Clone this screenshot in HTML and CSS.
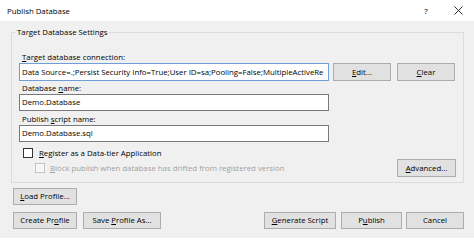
FILE: index.html
```html
<!DOCTYPE html>
<html lang="en">
<head>
<meta charset="utf-8">
<title>Publish Database</title>
<link rel="stylesheet" href="styles.css">
</head>
<body>
<div class="window">
  <div class="titlebar">
    <span class="title">Publish Database</span>
    <div class="controls">
      <span class="ctl help">?</span>
      <span class="ctl close">
        <svg width="10" height="10" viewBox="0 0 10 10"><path d="M0.5 0.5 L9.5 9.5 M9.5 0.5 L0.5 9.5" stroke="#1a1a1a" stroke-width="1" fill="none"/></svg>
      </span>
    </div>
  </div>
  <div class="content">
    <fieldset class="group">
      <legend class="legend">Target Database Settings</legend>
      <div class="group-body">
        <div class="label first"><u>T</u>arget database connection:</div>
        <div class="conn-row">
          <div class="textbox focused">Data Source=.;Persist Security Info=True;User ID=sa;Pooling=False;MultipleActiveRe</div>
          <button class="btn edit"><u>E</u>dit...</button>
          <button class="btn clear"><u>C</u>lear</button>
        </div>
        <div class="label">Database <u>n</u>ame:</div>
        <div class="textbox">Demo.Database</div>
        <div class="label">Publish <u>s</u>cript name:</div>
        <div class="textbox">Demo.Database.sql</div>
        <div class="check-row">
          <span class="checkbox"></span>
          <span><u>R</u>egister as a Data-tier Application</span>
        </div>
        <div class="block-row">
          <span class="checkbox disabled"></span>
          <span class="disabled-text"><u>B</u>lock publish when database has drifted from registered version</span>
          <button class="btn advanced"><u>A</u>dvanced...</button>
        </div>
      </div>
    </fieldset>
    <div class="footer">
      <div class="footer-row load-row">
        <button class="btn load"><u>L</u>oad Profile...</button>
      </div>
      <div class="footer-row action-row">
        <button class="btn create">Create Pr<u>o</u>file</button>
        <button class="btn save">Save <u>P</u>rofile As...</button>
        <button class="btn generate"><u>G</u>enerate Script</button>
        <button class="btn publish">P<u>u</u>blish</button>
        <button class="btn cancel">Cancel</button>
      </div>
    </div>
  </div>
</div>
</body>
</html>
```
FILE: styles.css
```css
html, body {
  margin: 0;
  padding: 0;
  background: #ffffff;
}
body {
  font-family: "Open Sans", "Noto Sans", sans-serif;
  font-size: 7.8px;
  color: #000;
}
.window {
  width: 474px;
  height: 241px;
  display: flex;
  flex-direction: column;
  padding-bottom: 3px;
  box-sizing: border-box;
  background: #fff;
}
.titlebar {
  height: 21px;
  flex: 0 0 21px;
  display: flex;
  align-items: center;
  padding-left: 7px;
  background: #fff;
}
.title {
  line-height: 12px;
}
.controls {
  margin-left: auto;
  display: flex;
  height: 21px;
}
.ctl {
  width: 32px;
  height: 21px;
  display: flex;
  align-items: center;
  justify-content: center;
}
.help {
  font-size: 8px;
}
.close svg {
  display: block;
  width: 9px;
  height: 9px;
}
.content {
  flex: 1;
  background: #f0f0f0;
  padding: 0 10px 0 11px;
  display: flex;
  flex-direction: column;
}
.group {
  margin: 5px 0 0 0;
  padding: 0;
  border: 1px solid #dcdcdc;
  min-width: 0;
}
.legend {
  margin-left: 3px;
  padding: 0 2px;
  line-height: 12px;
}
.group-body {
  padding: 0 7px 5px 7px;
  display: flex;
  flex-direction: column;
}
.label {
  line-height: 12px;
  padding-left: 3px;
  margin-top: 1px;
}
.label.first {
  margin-top: 13px;
}
.label + .textbox {
  margin-bottom: 1px;
}
.textbox {
  width: 310px;
  height: 17px;
  box-sizing: border-box;
  border: 1px solid #7a7a7a;
  background: #fff;
  padding: 0 2px;
  line-height: 15px;
  white-space: nowrap;
  overflow: hidden;
}
.textbox.focused {
  border-color: #6f9fd8;
}
.conn-row {
  display: flex;
  align-items: stretch;
  height: 18px;
}
.conn-row .textbox {
  height: 18px;
  line-height: 16px;
}
.btn {
  font: inherit;
  color: #000;
  background: #e1e1e1;
  border: 1px solid #adadad;
  padding: 0;
  margin: 0;
  height: 17px;
  line-height: 15px;
  text-align: center;
  border-radius: 0;
  box-sizing: border-box;
}
.edit {
  width: 58px;
  height: 18px;
  margin-left: 4px;
}
.clear {
  width: 58px;
  height: 18px;
  margin-left: 6px;
}
.check-row {
  display: flex;
  align-items: center;
  height: 12px;
  margin-top: 4px;
  padding-left: 4px;
}
.checkbox {
  width: 10px;
  height: 10px;
  box-sizing: border-box;
  border: 1px solid #333;
  background: #fff;
  margin-right: 6px;
  flex: 0 0 auto;
}
.checkbox.disabled {
  border-color: #c4c4c4;
  background: #f7f7f7;
  margin-right: 5px;
}
.block-row {
  display: flex;
  align-items: center;
  height: 18px;
  padding-left: 16px;
}
.disabled-text {
  color: #a0a0a0;
}
.advanced {
  width: 59px;
  height: 18px;
  margin-left: auto;
}
.footer {
  display: flex;
  flex-direction: column;
  padding-left: 2px;
}
.footer-row {
  display: flex;
}
.load-row {
  margin-top: 5px;
}
.action-row {
  margin-top: 7px;
}
.load, .create {
  width: 64px;
}
.save {
  width: 78px;
  margin-left: 6px;
}
.generate {
  width: 72px;
  margin-left: auto;
}
.publish {
  width: 61px;
  margin-left: 5px;
}
.cancel {
  width: 58px;
  margin-left: 4px;
}
u {
  text-underline-offset: 1px;
}
```
